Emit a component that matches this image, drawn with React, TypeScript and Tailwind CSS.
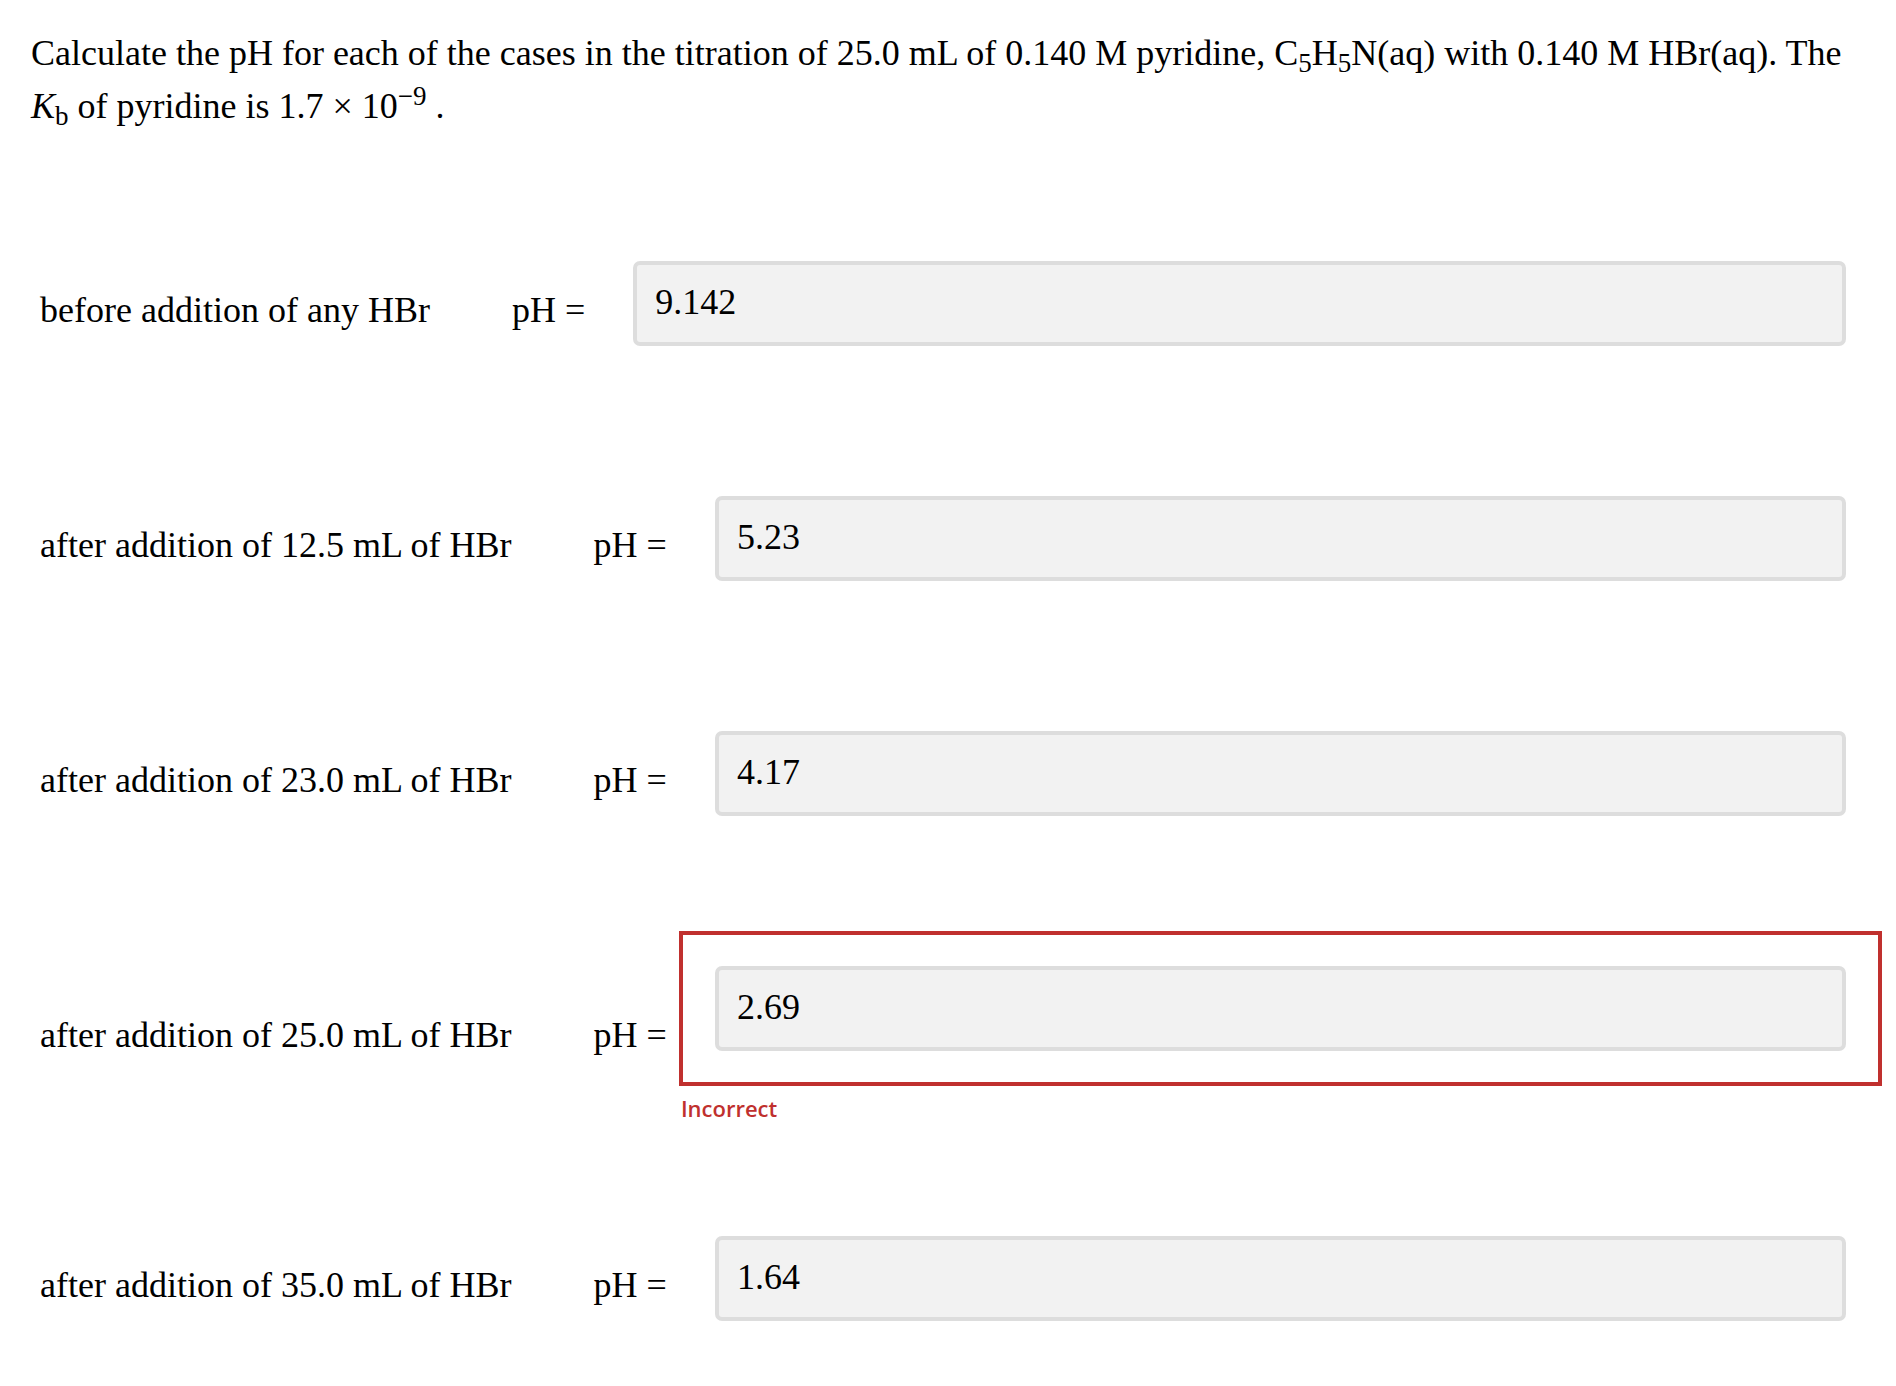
import React from 'react'

const serif = { fontFamily: '"Liberation Serif", "Times New Roman", serif' }

interface Row {
  label: string
  value: string
  incorrect?: boolean
}

const rows: Row[] = [
  { label: 'before addition of any HBr', value: '9.142' },
  { label: 'after addition of 12.5 mL of HBr', value: '5.23' },
  { label: 'after addition of 23.0 mL of HBr', value: '4.17' },
  { label: 'after addition of 25.0 mL of HBr', value: '2.69', incorrect: true },
  { label: 'after addition of 35.0 mL of HBr', value: '1.64' },
]

function AnswerRow({ row }: { row: Row }) {
  const top = row.incorrect ? 'mt-[84px]' : 'mt-[64px]'
  return (
    <div className="flex items-start pl-[40px] pr-[14px]">
      <div className={`${top} text-[36px] leading-[40px] whitespace-nowrap`}>{row.label}</div>
      <div className={`${top} ml-[82px] text-[36px] leading-[40px] whitespace-nowrap`}>pH =</div>
      <div className="ml-[12px] flex-1 flex flex-col">
        <div className={`border-[4px] px-[32px] py-[31px] ${row.incorrect ? 'border-[#c0302e]' : 'border-transparent'}`}>
          <div className="h-[85px] bg-[#f2f2f2] border-[4px] border-[#dddddd] rounded-[7px] px-[18px] flex items-center pb-[4px] text-[36px] leading-none">
            {row.value}
          </div>
        </div>
        {row.incorrect && (
          <div
            className="mt-[9px] pl-[2px] text-[22px] leading-[26px] font-semibold text-[#c0302e]"
            style={{ fontFamily: '"Open Sans", "Noto Sans", sans-serif' }}
          >
            Incorrect
          </div>
        )}
      </div>
    </div>
  )
}

export default function App() {
  return (
    <div className="min-h-screen bg-white text-black pb-[30px]" style={serif}>
      {/* Question text */}
      <div className="pt-[27px] pl-[31px] text-[36px] leading-[53px]">
        <div className="whitespace-nowrap">
          Calculate the pH for each of the cases in the titration of 25.0 mL of 0.140 M pyridine, C<sub>5</sub>H<sub>5</sub>N(aq) with 0.140 M HBr(aq). The
        </div>
        <div className="whitespace-nowrap">
          <i>K</i><sub>b</sub> of pyridine is 1.7 × 10<sup>−9</sup> .
        </div>
      </div>

      {/* Answers */}
      <div className="mt-[93px] flex flex-col gap-[80px]">
        {rows.map((r) => (
          <AnswerRow key={r.label} row={r} />
        ))}
      </div>
    </div>
  )
}
